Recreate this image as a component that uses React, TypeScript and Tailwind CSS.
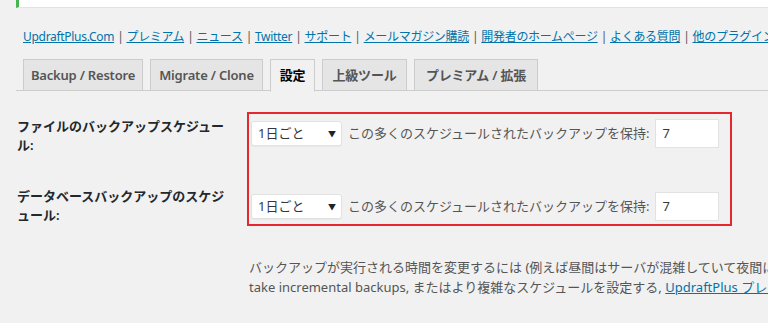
import React from "react";

const font = "font-['Noto_Sans','Noto_Sans_CJK_JP',sans-serif]";

const links = [
  "UpdraftPlus.Com",
  "プレミアム",
  "ニュース",
  "Twitter",
  "サポート",
  "メールマガジン購読",
  "開発者のホームページ",
  "よくある質問",
  "他のプラグイン",
];

// label, width in px
const tabs: [string, string][] = [
  ["Backup / Restore", "w-[120px]"],
  ["Migrate / Clone", "w-[113px]"],
  ["設定", "w-[45px]"],
  ["上級ツール", "w-[85px]"],
  ["プレミアム / 拡張", "w-[124px]"],
];

function FakeSelect() {
  return (
    <div className="flex items-center justify-between w-[91px] h-[25px] bg-white border border-[#e2e2e2] rounded-[3px] pl-[6px] pr-[5px] shadow-[0_1px_1px_rgba(0,0,0,0.04)]">
      <span className="text-[13px] text-[#32373c]">1日ごと</span>
      <span className="text-[8px] text-[#222]">▼</span>
    </div>
  );
}

function ScheduleRow() {
  return (
    <div className="flex items-center pl-[2px]">
      <FakeSelect />
      <span className="ml-[6px] text-[13px] text-[#555] whitespace-nowrap">
        この多くのスケジュールされたバックアップを保持:
      </span>
      <div className="ml-[5px] w-[64px] h-[29px] bg-white border border-[#e2e2e2] flex items-center pl-[7px] text-[13px] text-[#32373c]">
        7
      </div>
    </div>
  );
}

export default function App() {
  return (
    <div className={`w-[768px] h-[323px] overflow-hidden bg-[#f1f1f1] ${font}`}>
      {/* notice box edge */}
      <div className="ml-[16px] h-[8px] bg-white border-l-[3px] border-l-[#46b450] border-b border-b-[#e2e2e2]" />

      {/* links */}
      <div className="mt-[20px] pl-[23px] text-[12px] leading-[18px] tracking-[-0.3px] whitespace-nowrap overflow-hidden text-[#555]">
        {links.map((l, i) => (
          <React.Fragment key={l}>
            {i > 0 && <span className="mx-[3px]">|</span>}
            <a href="#" className="text-[#0073aa] underline">
              {l}
            </a>
          </React.Fragment>
        ))}
      </div>

      {/* tabs */}
      <div className="mt-[13px] ml-[16px] pl-[7px] flex gap-[7px] border-b border-[#ccc] h-[32px]">
        {tabs.map(([t, w]) => {
          const active = t === "設定";
          return (
            <div
              key={t}
              className={`${w} shrink-0 text-center text-[13px] tracking-[-0.2px] font-semibold leading-[30px] whitespace-nowrap border border-[#ccc] ${
                active
                  ? "h-[33px] border-b-[#f1f1f1] bg-[#f1f1f1] text-[#000]"
                  : "h-[32px] bg-[#e5e5e5] text-[#555]"
              }`}
            >
              {t}
            </div>
          );
        })}
      </div>

      {/* settings */}
      <div className="mt-[21px] flex">
        <div className="w-[247px] pl-[17px] pt-[5px] text-[13px] leading-[19px] font-semibold text-[#23282d]">
          <div>
            ファイルのバックアップスケジュー
            <br />
            ル:
          </div>
          <div className="mt-[32px]">
            データベースバックアップのスケジ
            <br />
            ュール:
          </div>
        </div>
        <div className="w-[485px] h-[114px] border-2 border-[#e5282e] pt-[5px]">
          <ScheduleRow />
          <div className="mt-[44px]">
            <ScheduleRow />
          </div>
        </div>
      </div>

      {/* description */}
      <div className="mt-[31px] pl-[249px] text-[13px] leading-[20px] text-[#555] whitespace-nowrap">
        <div>バックアップが実行される時間を変更するには (例えば昼間はサーバが混雑していて夜間に実行したい場合), to</div>
        <div>
          take incremental backups, またはより複雑なスケジュールを設定する,{" "}
          <a href="#" className="text-[#0073aa] underline">
            UpdraftPlus プレミアム
          </a>{" "}
          を使用してください
        </div>
      </div>
    </div>
  );
}
